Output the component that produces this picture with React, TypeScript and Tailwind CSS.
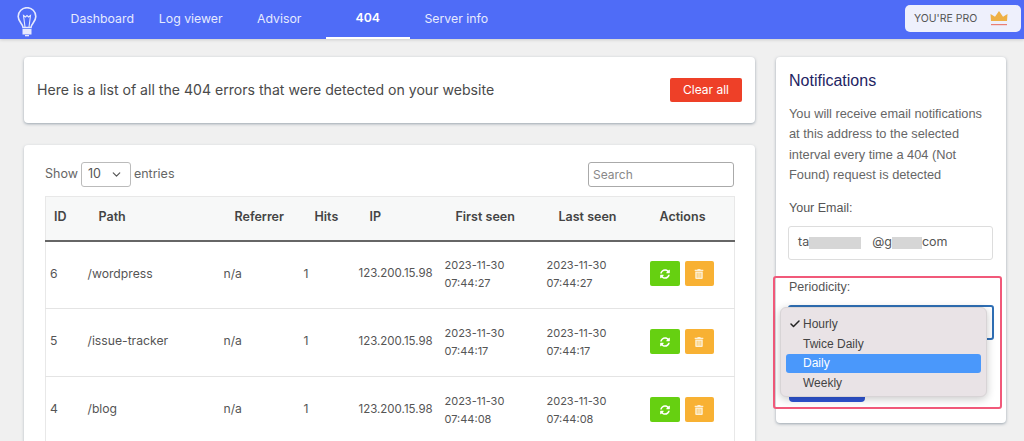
import { Check, ChevronDown } from "lucide-react"
import { FaSyncAlt, FaTrashAlt } from "react-icons/fa"

const rows = [
  { id: 6, path: "/wordpress", first: "07:44:27" },
  { id: 5, path: "/issue-tracker", first: "07:44:17" },
  { id: 4, path: "/blog", first: "07:44:08" },
]

const tabs = ["Dashboard", "Log viewer", "Advisor", "404", "Server info"]

const heads = [
  { label: "ID", cls: "w-[38px] pl-[8px]" },
  { label: "Path", cls: "w-[136px] pl-[15px]" },
  { label: "Referrer", cls: "w-[80px] pl-[15px]" },
  { label: "Hits", cls: "w-[55px] pl-[15px]" },
  { label: "IP", cls: "w-[86px] pl-[15px]" },
  { label: "First seen", cls: "w-[102px] pl-[15px]" },
  { label: "Last seen", cls: "w-[97px] pl-[16px]" },
  { label: "Actions", cls: "pl-[20px]" },
]

function Bulb() {
  return (
    <svg width="20" height="30" viewBox="0 0 20 30" fill="none" stroke="#e6e9fe" strokeWidth="1.6">
      <path d="M6 20.5c0-3.5-4.8-5.5-4.8-11a8.8 8.8 0 0 1 17.6 0c0 5.5-4.8 7.5-4.8 11z" />
      <path d="M8 20 6.5 8.5l2 1.5L10 8.5l1.5 1.5 2-1.5L12 20" strokeWidth="1.1" />
      <path d="M5.5 22h9v5.5h-9z" fill="#e6e9fe" stroke="none" />
      <path d="M8 28h4v1.3H8z" fill="#e6e9fe" stroke="none" />
    </svg>
  )
}

function Crown() {
  return (
    <svg width="18" height="15" viewBox="0 0 18 15">
      <path d="M1 10 0.5 3l4.5 2.8L9 0l4 5.8L17.5 3 17 10z" fill="#eeb045" />
      <path d="M1 13h16v1.2H1z" fill="#ea7f75" />
    </svg>
  )
}

export default function App() {
  return (
    <div className="h-[441px] w-[1024px] overflow-hidden relative bg-[#f0f0f0] font-['Inter',sans-serif] text-[#555]">
      <header className="h-[39px] bg-[#4f6cf7] flex items-stretch pl-[58px] pr-[3px] shadow-[0_1px_3px_rgba(0,0,0,0.15)]">
        <div className="absolute left-[17px] top-[7px]">
          <Bulb />
        </div>
        <nav className="flex">
          {tabs.map((tab) => (
            <div
              key={tab}
              className={
                tab === "404"
                  ? "w-[84.5px] mx-[2px] flex items-center justify-center text-[12.3px] font-semibold text-white border-b-2 border-white"
                  : "w-[88.5px] flex items-center justify-center text-[12.3px] text-[#e6eafe]"
              }
            >
              {tab}
            </div>
          ))}
        </nav>
        <div className="ml-auto self-center mt-[-2px] w-[116px] h-[27px] rounded-[5px] bg-[#eef0fc] flex items-center justify-between pl-[9px] pr-[13px] text-[10.5px] text-[#555]">
          <span>YOU'RE PRO</span>
          <Crown />
        </div>
      </header>

      <main className="flex gap-[21px] pl-[24px] pt-[18px]">
        <div className="w-[731px] flex flex-col gap-[22px]">
          <section className="h-[66px] bg-white rounded-[4px] shadow-[0_1px_3px_rgba(70,90,110,0.5)] flex items-center justify-between pl-[13px] pr-[13px]">
            <p className="text-[14.1px] text-[#4a4a4a]">
              Here is a list of all the 404 errors that were detected on your website
            </p>
            <button className="w-[72px] h-[24px] rounded-[2px] bg-[#ee4028] text-white text-[12px]">Clear all</button>
          </section>

          <section className="bg-white rounded-[4px] shadow-[0_1px_3px_rgba(70,90,110,0.35)] pt-[17px] px-[21px] h-[320px]">
            <div className="flex items-center justify-between text-[12.5px] h-[25px] text-[#666]">
              <div className="flex items-center gap-[3px]">
                <span>Show</span>
                <div className="w-[50px] h-[25px] border border-[#bbb] rounded-[3px] flex items-center justify-between pl-[6px] pr-[7px] text-[#555]">
                  10
                  <ChevronDown size={13} strokeWidth={2.2} />
                </div>
                <span>entries</span>
              </div>
              <div className="w-[146px] h-[25px] border border-[#aaa] rounded-[3px] flex items-center pl-[4px] text-[12px] text-[#888]">
                Search
              </div>
            </div>
            <table className="mt-[9px] w-[690px] table-fixed border-collapse border border-[#e8e8e8] text-[12.2px] text-[#555]">
              <thead>
                <tr className="h-[44px] bg-[#f7f8f8] border-b-2 border-b-[#666]">
                  {heads.map((h) => (
                    <th key={h.label} className={`${h.cls} pb-[2px] text-left text-[12.5px] font-semibold text-[#444] whitespace-nowrap`}>
                      {h.label}
                    </th>
                  ))}
                </tr>
              </thead>
              <tbody>
                {rows.map((r) => (
                  <tr key={r.id} className="h-[68px] first:h-[68px] border-b border-[#e4e4e4] [&>td]:pb-[2px]">
                    <td className="pl-[4px]">{r.id}</td>
                    <td className="pl-[4px]">{r.path}</td>
                    <td className="pl-[4px]">n/a</td>
                    <td className="pl-[4px]">1</td>
                    <td className="pl-[4px] text-[11.5px] whitespace-nowrap">123.200.15.98</td>
                    <td className="pl-[4px] text-[11px] leading-[18px]">
                      2023-11-30
                      <br />
                      {r.first}
                    </td>
                    <td className="pl-[4px] text-[11px] leading-[18px]">
                      2023-11-30
                      <br />
                      {r.first}
                    </td>
                    <td className="pl-[10px]">
                      <div className="flex gap-[5px]">
                        <button className="w-[30px] h-[25px] rounded-[2px] bg-[#66d011] text-white flex items-center justify-center">
                          <FaSyncAlt size={10} />
                        </button>
                        <button className="w-[29px] h-[25px] rounded-[2px] bg-[#f8b133] text-[#fdf0d5] flex items-center justify-center">
                          <FaTrashAlt size={10} />
                        </button>
                      </div>
                    </td>
                  </tr>
                ))}
              </tbody>
            </table>
          </section>
        </div>

        <aside className="w-[230px] h-[366px] bg-white rounded-[4px] shadow-[0_1px_3px_rgba(70,90,110,0.5)] pl-[13px] pr-[12px] pt-[14px] font-['Liberation_Sans',sans-serif]">
          <h2 className="text-[16px] leading-[19px] text-[#1e2463]">Notifications</h2>
          <p className="mt-[14px] w-[200px] text-[12.8px] leading-[20.4px] text-[#666]">
            You will receive email notifications at this address to the selected interval every time a 404 (Not Found) request is detected
          </p>
          <label className="block mt-[15px] text-[12.5px] leading-[15px] text-[#555]">Your Email:</label>
          <div className="mt-[10px] ml-[-1px] w-[205px] h-[34px] border border-[#ddd] rounded-[3px] flex items-center pl-[9px] text-[12.5px] text-[#555] font-['Inter',sans-serif]">
            <span>ta</span>
            <span className="w-[52px] h-[12px] bg-[#d6d6d6]" />
            <span className="ml-[11px]">@g</span>
            <span className="w-[30px] h-[12px] bg-[#d6d6d6]" />
            <span>com</span>
          </div>
          <label className="block mt-[20px] text-[12.5px] leading-[15px] text-[#555]">Periodicity:</label>
          <div className="mt-[10px] ml-[-1px] w-[206px] h-[35px] border-2 border-[#2f6fb5] rounded-[3px]" />
          <button className="mt-[45px] w-[76px] h-[17px] rounded-b-[4px] bg-[#2f55d4]" />
        </aside>
      </main>

      <div className="absolute left-[773px] top-[276px] w-[229px] h-[133px] border-2 border-[#f1597a] rounded-[3px]" />
      <div className="absolute left-[780px] top-[307px] w-[207px] h-[90px] rounded-[6px] bg-[#e9e3e6] shadow-[0_2px_8px_rgba(0,0,0,0.22)] border border-[#d8d4d6] pt-[6px] px-[5px] font-['Liberation_Sans',sans-serif] text-[12px] text-[#444]">
        {["Hourly", "Twice Daily", "Daily", "Weekly"].map((item) => (
          <div
            key={item}
            className={
              item === "Daily"
                ? "relative h-[19.8px] rounded-[3px] pl-[17px] flex items-center bg-[#4a98fb] text-white"
                : "relative h-[19.8px] pl-[17px] flex items-center"
            }
          >
            {item === "Hourly" && <Check size={12} strokeWidth={3} className="absolute left-[3px] top-[4px] text-[#222]" />}
            {item}
          </div>
        ))}
      </div>
    </div>
  )
}
